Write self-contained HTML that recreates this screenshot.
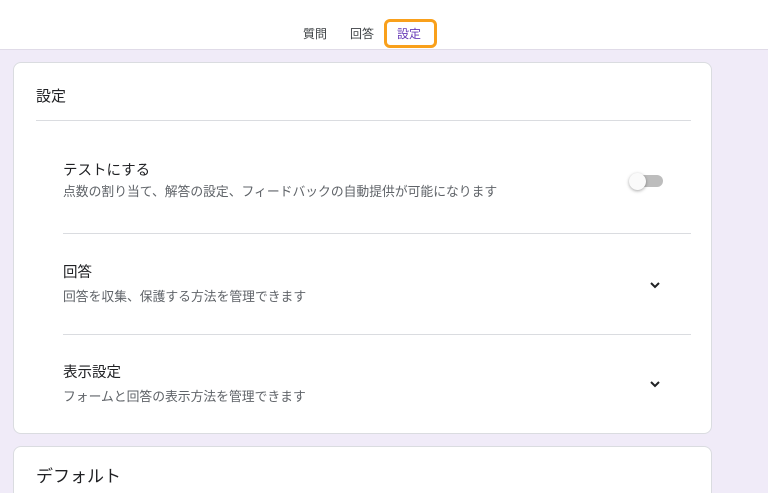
<!DOCTYPE html>
<html><head><meta charset="utf-8"><style>
*{margin:0;padding:0;box-sizing:border-box}
html,body{width:768px;height:493px;overflow:hidden}
body{background:#f0ebf8;font-family:"Liberation Sans","Noto Sans CJK JP",sans-serif;color:#202124;position:relative}
.hdr{position:absolute;left:0;top:0;width:768px;height:50px;background:#fff;border-bottom:1px solid #e0dbe8}
.tab{position:absolute;top:25px;font-size:12px;color:#3c4043}
.hl{position:absolute;left:384px;top:19px;width:53px;height:29px;border:3px solid #f9a01b;border-radius:6px}
.card{position:absolute;left:13px;width:699px;background:#fff;border-radius:8px;border:1px solid #dadce0}
.t{position:absolute;font-size:14.5px}
.s{position:absolute;font-size:12.8px;color:#5f6368}
.line{position:absolute;height:1px;background:#dadce0}
</style></head><body>
<div class="hdr">
<div class="tab" style="left:303px">質問</div>
<div class="tab" style="left:350px">回答</div>
<div class="tab" style="left:397px;color:#673ab7">設定</div>
<div class="hl"></div>
</div>
<div class="card" style="top:62px;height:372px">
<div class="t" style="left:22px;top:22px;font-size:15px">設定</div>
<div class="line" style="left:22px;top:57px;width:655px"></div>
<div class="t" style="left:49px;top:96px">テストにする</div>
<div class="s" style="left:49px;top:118px">点数の割り当て、解答の設定、フィードバックの自動提供が可能になります</div>
<div style="position:absolute;left:619px;top:112px;width:30px;height:12px;border-radius:6px;background:#bdbdbd"></div>
<div style="position:absolute;left:615px;top:110px;width:17px;height:17px;border-radius:50%;background:#fafafa;box-shadow:0 1px 3px rgba(0,0,0,.35)"></div>
<div class="line" style="left:49px;top:170px;width:628px"></div>
<div class="t" style="left:49px;top:198px">回答</div>
<div class="s" style="left:49px;top:223px">回答を収集、保護する方法を管理できます</div>
<svg style="position:absolute;left:634px;top:215px" width="14" height="14" viewBox="0 0 14 14"><path d="M3 5l4 4 4-4" fill="none" stroke="#202124" stroke-width="2"/></svg>
<div class="line" style="left:49px;top:271px;width:628px"></div>
<div class="t" style="left:49px;top:298px">表示設定</div>
<div class="s" style="left:49px;top:323px">フォームと回答の表示方法を管理できます</div>
<svg style="position:absolute;left:634px;top:314px" width="14" height="14" viewBox="0 0 14 14"><path d="M3 5l4 4 4-4" fill="none" stroke="#202124" stroke-width="2"/></svg>
</div>
<div class="card" style="top:446px;height:47px;border-bottom:none;border-radius:8px 8px 0 0">
<div class="t" style="left:22px;top:15px;font-size:17px">デフォルト</div>
</div>
</body></html>
